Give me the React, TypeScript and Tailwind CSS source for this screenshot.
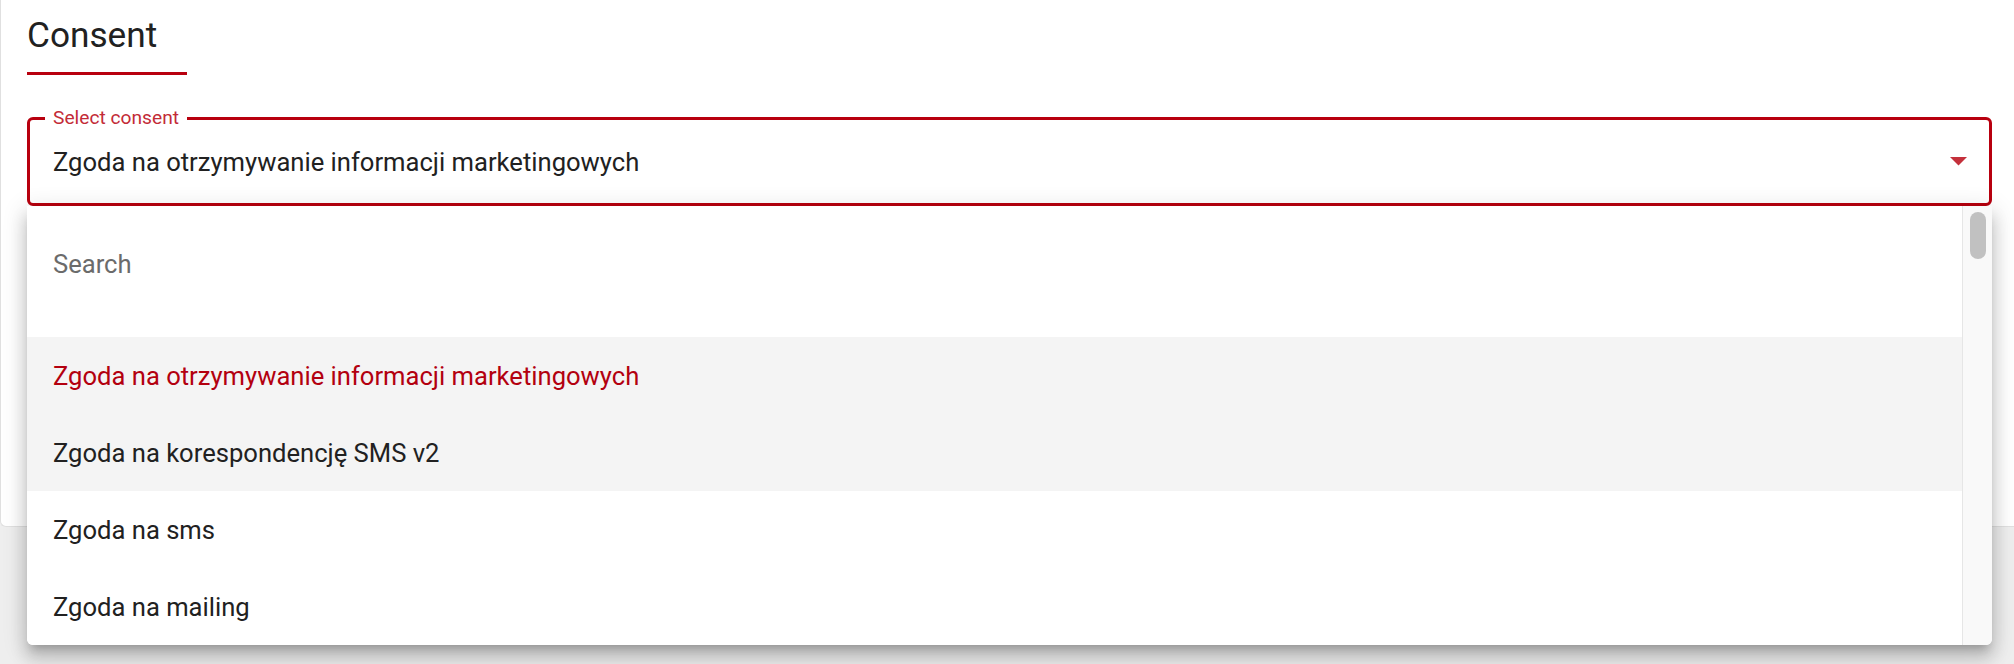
import React from "react";

export default function App() {
  const items = [
    { label: "Zgoda na otrzymywanie informacji marketingowych", selected: true, hover: false },
    { label: "Zgoda na korespondencję SMS v2", selected: false, hover: true },
    { label: "Zgoda na sms", selected: false, hover: false },
    { label: "Zgoda na mailing", selected: false, hover: false },
  ];
  return (
    <div className="h-[664px] w-full overflow-hidden bg-[#eeeeee] font-['Roboto',sans-serif] text-[#212121]">
      <div className="h-[527px] bg-white border-l border-b border-[#e0e0e0] rounded-bl-[6px] pl-[26px] pr-[22px] pt-[17px]">
        <h2 className="text-[35.2px] leading-[36px] font-normal text-[#212121]">Consent</h2>
        <div className="mt-[19px] h-[3px] w-[160px] bg-[#b8000f]" />
        <div className="relative mt-[42px]">
          <div className="relative h-[89px] rounded-[6px] border-[3px] border-[#b8000f] pl-[23px] pt-[27px]">
            <span className="absolute left-[15px] top-[-12px] bg-white px-[8px] text-[19.2px] leading-[20px] text-[#c32b37]">
              Select consent
            </span>
            <div className="text-[25.6px] leading-[30px] text-[#212121]">
              Zgoda na otrzymywanie informacji marketingowych
            </div>
            <svg
              className="absolute right-[22px] top-[37px]"
              width="17"
              height="9"
              viewBox="0 0 17 9"
            >
              <polygon points="0,0 17,0 8.5,8.5" fill="#c4303b" />
            </svg>
          </div>
          <div className="absolute left-0 right-0 top-full z-10 flex h-[439px] overflow-hidden rounded-b-[6px] bg-white shadow-[0_8px_8px_-5px_rgba(0,0,0,0.2),0_13px_16px_2px_rgba(0,0,0,0.14),0_5px_23px_3px_rgba(0,0,0,0.12)]">
            <div className="flex min-w-0 flex-1 flex-col">
              <div className="h-[131px] shrink-0 pl-[26px] pt-[43px] text-[25.6px] leading-[30px] text-[#6b6b6b]">
                Search
              </div>
              {items.map((it) => (
                <div
                  key={it.label}
                  className={
                    "flex h-[77px] shrink-0 items-center pl-[26px] text-[25.6px] leading-[30px] " +
                    (it.selected || it.hover ? "bg-[#f4f4f4] " : "bg-white ") +
                    (it.selected ? "text-[#b3000f]" : "text-[#212121]")
                  }
                >
                  {it.label}
                </div>
              ))}
            </div>
            <div className="w-[30px] shrink-0 border-l border-[#e6e6e6] bg-[#f9f9f9] pl-[7px] pt-[6px]">
              <div className="h-[47px] w-[16px] rounded-full bg-[#c1c1c1]" />
            </div>
          </div>
        </div>
      </div>
    </div>
  );
}
